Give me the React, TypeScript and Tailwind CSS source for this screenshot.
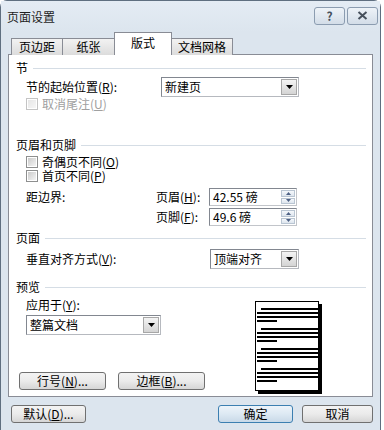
import React from "react";

function Key({ k }: { k: string }) {
  return (
    <span>
      (<span className="underline">{k}</span>)
    </span>
  );
}

function Check({ disabled }: { disabled?: boolean }) {
  return (
    <span
      className={
        "inline-block w-[12px] h-[12px] border p-px bg-white " +
        (disabled ? "border-[#c4c4c4]" : "border-[#8e8f8f]")
      }
    >
      <span
        className={
          "block w-full h-full bg-linear-to-br " +
          (disabled ? "from-[#e6e6e6] to-[#f6f6f6]" : "from-[#cbcbcb] to-[#f4f4f4]")
        }
      />
    </span>
  );
}

function Arrow() {
  return (
    <span className="flex items-center justify-center w-[16px] h-full border border-[#a7a7a7] bg-linear-to-b from-[#f4f4f4] to-[#d4d4d4]">
      <svg width="7" height="4" viewBox="0 0 7 4">
        <path d="M0 0h7L3.5 4z" fill="#000" />
      </svg>
    </span>
  );
}

function Select({ value, w }: { value: string; w: string }) {
  return (
    <div
      className={
        "flex h-[20px] items-stretch border border-t-[#828790] border-l-[#828790] border-r-[#b6b9bf] border-b-[#b6b9bf] bg-white p-px " +
        w
      }
    >
      <span className="flex-1 flex items-center pl-[2px]">{value}</span>
      <Arrow />
    </div>
  );
}

function Spin({ value }: { value: string }) {
  return (
    <div className="flex h-[18px] w-[88px] border border-t-[#828790] border-l-[#828790] border-r-[#c2c5ca] border-b-[#c2c5ca] bg-white p-px">
      <span className="flex-1 flex items-center pl-[2px]">{value}</span>
      <span className="flex flex-col w-[14px] gap-px">
        <span className="flex-1 flex items-center justify-center border border-[#b9c5d2] bg-linear-to-b from-[#f5f8fb] to-[#dde5ee]">
          <svg width="5" height="3" viewBox="0 0 5 3">
            <path d="M0 3h5L2.5 0z" fill="#4d6185" />
          </svg>
        </span>
        <span className="flex-1 flex items-center justify-center border border-[#b9c5d2] bg-linear-to-b from-[#f5f8fb] to-[#dde5ee]">
          <svg width="5" height="3" viewBox="0 0 5 3">
            <path d="M0 0h5L2.5 3z" fill="#4d6185" />
          </svg>
        </span>
      </span>
    </div>
  );
}

function Header({ text, mt }: { text: string; mt: string }) {
  return (
    <div className={"flex items-center h-[14px] pl-[7px] pr-[6px] " + mt}>
      <span>{text}</span>
      <span className="flex-1 h-px bg-[#d5dde5] ml-[5px]" />
    </div>
  );
}

function Btn({
  children,
  w,
  primary,
}: {
  children: React.ReactNode;
  w: string;
  primary?: boolean;
}) {
  return (
    <div
      className={
        "flex items-center justify-center h-[18px] rounded-[3px] border bg-linear-to-b " +
        (primary
          ? "border-[#3c7fb1] from-[#edf4fa] via-[#dde9f3] to-[#c9d9e8] "
          : "border-[#707070] from-[#f3f3f3] via-[#ebebeb] to-[#d6d6d6] ") +
        w
      }
    >
      {children}
    </div>
  );
}

function Para() {
  return (
    <div className="flex flex-col gap-[2px]">
      <span className="h-[2px] ml-[5px] bg-black" />
      <span className="h-[2px] ml-px bg-black" />
      <span className="h-[2px] ml-px bg-black" />
      <span className="h-[2px] ml-px w-[20px] bg-black" />
    </div>
  );
}

export default function App() {
  return (
    <div className="w-[384px] h-[430px] bg-white overflow-hidden font-['SimSun','Noto_Sans_CJK_SC','Liberation_Sans',sans-serif] text-[12px] leading-[14px] text-black">
      <div className="w-[381px] h-[430px] rounded-t-[7px] border-l border-t border-r border-[#5f6f80] bg-[#dce5ee]">
        {/* title bar */}
        <div className="flex items-center justify-between h-[31px] pl-[6px] pr-[2px] bg-linear-to-b from-[#e4ecf4] to-[#dce5ee]">
          <span className="text-[12px] text-[#1e1e1e]">页面设置</span>
          <div className="flex gap-[2px] -mt-[2px]">
            <div className="flex items-center justify-center w-[31px] h-[18px] rounded-[3px] border border-[#8b9cb0] bg-linear-to-b from-[#eef3f8] to-[#d3dde8]">
              <span className="text-[12px] font-bold text-[#46505c]">?</span>
            </div>
            <div className="flex items-center justify-center w-[31px] h-[18px] rounded-[3px] border border-[#8b9cb0] bg-linear-to-b from-[#eef3f8] to-[#d3dde8]">
              <svg width="11" height="9" viewBox="0 0 11 9">
                <path d="M1.5 1l8 7M9.5 1l-8 7" stroke="#46505c" strokeWidth="2" />
              </svg>
            </div>
          </div>
        </div>

        {/* tabs */}
        <div className="flex items-end h-[23px] ml-[10px] relative z-10 -mb-px">
          <div className="flex items-center justify-center w-[52px] h-[17px] border border-b-0 border-[#898c95] bg-linear-to-b from-[#f2f2f2] to-[#dcdcdc]">
            页边距
          </div>
          <div className="flex items-center justify-center w-[53px] h-[17px] -ml-px border border-b-0 border-[#898c95] bg-linear-to-b from-[#f2f2f2] to-[#dcdcdc]">
            纸张
          </div>
          <div className="flex items-center justify-center w-[58px] h-[23px] -ml-px border border-b-0 border-[#898c95] bg-white pb-[3px]">
            版式
          </div>
          <div className="flex items-center justify-center w-[62px] h-[17px] -ml-px border border-b-0 border-[#898c95] bg-linear-to-b from-[#f2f2f2] to-[#dcdcdc]">
            文档网格
          </div>
        </div>

        {/* panel */}
        <div className="ml-[7px] w-[365px] h-[343px] border border-[#898c95] bg-white pt-[6px]">
          <Header text="节" mt="" />
          <div className="flex items-center h-[20px] mt-[2px] pl-[17px]">
            <span className="w-[135px]">
              节的起始位置<Key k="R" />:
            </span>
            <Select value="新建页" w="w-[138px]" />
          </div>
          <div className="flex items-center gap-[4px] h-[14px] pl-[17px] text-[#a0a0a0]">
            <Check disabled />
            <span>
              取消尾注<Key k="U" />
            </span>
          </div>

          <Header text="页眉和页脚" mt="mt-[27px]" />
          <div className="flex items-center gap-[4px] h-[14px] mt-[3px] pl-[17px]">
            <Check />
            <span>
              奇偶页不同<Key k="O" />
            </span>
          </div>
          <div className="flex items-center gap-[4px] h-[14px] pl-[17px]">
            <Check />
            <span>
              首页不同<Key k="P" />
            </span>
          </div>
          <div className="flex items-center h-[18px] mt-[5px] pl-[17px]">
            <span className="w-[130px]">距边界:</span>
            <span className="w-[53px]">
              页眉<Key k="H" />:
            </span>
            <Spin value="42.55 磅" />
          </div>
          <div className="flex items-center h-[18px] mt-[2px] pl-[17px]">
            <span className="w-[130px]" />
            <span className="w-[53px]">
              页脚<Key k="F" />:
            </span>
            <Spin value="49.6 磅" />
          </div>

          <Header text="页面" mt="mt-[5px]" />
          <div className="flex items-center h-[20px] mt-[4px] pl-[17px]">
            <span className="w-[184px]">
              垂直对齐方式<Key k="V" />:
            </span>
            <Select value="顶端对齐" w="w-[89px]" />
          </div>

          <Header text="预览" mt="mt-[11px]" />
          <div className="flex">
            <div className="w-[246px] pl-[7px]">
              <div className="flex items-center h-[14px] mt-[4px] pl-[10px]">
                应用于<Key k="Y" />:
              </div>
              <div className="mt-[3px] ml-[10px]">
                <Select value="整篇文档" w="w-[135px]" />
              </div>
              <div className="flex gap-[12px] mt-[37px] ml-[3px]">
                <Btn w="w-[87px]">
                  <span>
                    行号<Key k="N" />...
                  </span>
                </Btn>
                <Btn w="w-[87px]">
                  <span>
                    边框<Key k="B" />...
                  </span>
                </Btn>
              </div>
            </div>
            <div className="mt-[7px] w-[64px] h-[90px] border border-black bg-white shadow-[3px_3px_0_0_#000] pt-[6px] flex flex-col gap-[6px]">
              <Para />
              <Para />
              <Para />
              <Para />
            </div>
          </div>
        </div>

        {/* footer buttons */}
        <div className="flex items-center mt-[8px] pl-[10px]">
          <Btn w="w-[75px]">
            <span>
              默认<Key k="D" />...
            </span>
          </Btn>
          <div className="ml-[132px]">
            <Btn w="w-[75px]" primary>
              确定
            </Btn>
          </div>
          <div className="ml-[9px]">
            <Btn w="w-[71px]">取消</Btn>
          </div>
        </div>
      </div>
    </div>
  );
}
